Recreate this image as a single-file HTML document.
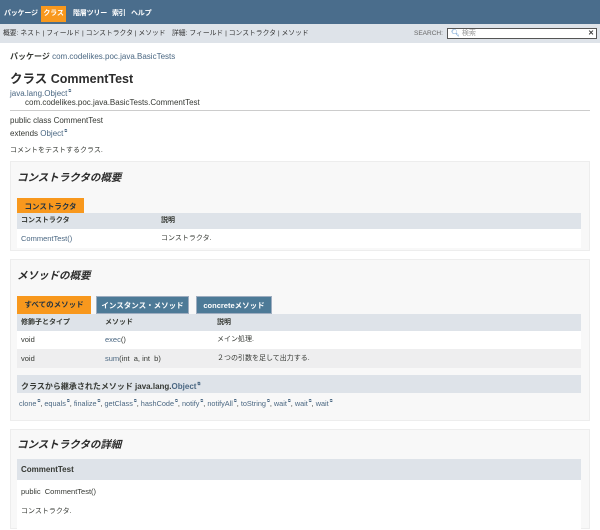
<!DOCTYPE html>
<html><head><meta charset="utf-8"><style>
*{margin:0;padding:0;box-sizing:border-box}
body{width:600px;height:524px;overflow:hidden;background:#fff;font-family:"Liberation Sans","Noto Sans CJK JP",sans-serif;font-size:8px;color:#353833;position:relative}
.a{position:absolute;white-space:nowrap}
.l{color:#4a6782;text-decoration:none}
.top{left:0;top:0;width:600px;height:24px;background:#4a6d8c}
.top span{position:absolute;top:6px;color:#fff;font-size:7px;line-height:16px;font-weight:bold;letter-spacing:-0.2px}
.sub{left:0;top:24px;width:600px;height:19px;background:#dee3e9;font-size:6.8px;line-height:19px;color:#333}
.box{position:absolute;left:10px;width:580px;background:#f8f8f8;border:1px solid #ededed}
.h3{position:absolute;left:6px;font-size:10.5px;font-weight:bold;font-style:italic;color:#2c2c2c}
.tab{position:absolute;height:18px;line-height:17px;font-weight:bold;font-size:7.5px;color:#fff;text-align:center}
.or{background:#f8981d;color:#253441}
.bl{background:#4d7a97;border:1px solid #9eadc0}
.hdr{position:absolute;left:6px;width:564px;background:#dee3e9;font-weight:bold;font-size:7px}
.row{position:absolute;left:6px;width:564px;font-size:7.5px}
.ext::after{content:"\29C9";font-size:4px;vertical-align:4px;margin-left:1px}
</style></head><body>
<div class="a top">
<span style="left:4px">パッケージ</span>
<span style="left:41px;width:25px;height:16px;background:#f8981d;text-align:center">クラス</span>
<span style="left:73px">階層ツリー</span>
<span style="left:112px">索引</span>
<span style="left:131px">ヘルプ</span>
</div>
<div class="a sub"><span style="position:absolute;left:3px">概要: ネスト | フィールド | コンストラクタ | メソッド</span><span style="position:absolute;left:172px">詳細: フィールド | コンストラクタ | メソッド</span>
<span style="position:absolute;left:414px;font-size:6.5px;color:#666">SEARCH:</span>
<div style="position:absolute;left:447px;top:4px;width:150px;height:11px;background:#fff;border:1px solid #555;line-height:9px;font-size:7px;color:#999;padding-left:3px"><span style="color:#4a86c5">&#x1F50D;&#xFE0E;</span> 検索<span style="position:absolute;right:2px;color:#333;font-weight:bold">✕</span></div></div>
<div class="a" style="left:10px;top:51px;font-size:8px"><b>パッケージ</b> <span class="l">com.codelikes.poc.java.BasicTests</span></div>
<div class="a" style="left:10px;top:68px;font-size:12.5px;font-weight:bold;color:#2c2c2c">クラス CommentTest</div>
<div class="a" style="left:10px;top:88px;font-size:8px"><span class="l ext">java.lang.Object</span></div>
<div class="a" style="left:25px;top:98px;font-size:8px">com.codelikes.poc.java.BasicTests.CommentTest</div>
<div class="a" style="left:10px;top:110px;width:580px;height:1px;background:#ccc"></div>
<div class="a" style="left:10px;top:116px;font-size:8px;line-height:10px">public class CommentTest<br>extends <span class="l ext">Object</span></div>
<div class="a" style="left:10px;top:145px;font-size:7px">コメントをテストするクラス.</div>

<div class="box" style="top:161px;height:90px">
<div class="h3" style="top:8px">コンストラクタの概要</div>
<div class="tab or" style="left:6px;top:36px;width:67px;height:16px">コンストラクタ</div>
<div class="hdr" style="top:51px;height:16px;line-height:16px"><span style="position:absolute;left:4px">コンストラクタ</span><span style="position:absolute;left:144px">説明</span></div>
<div class="row" style="top:67px;height:19px;line-height:19px;background:#fff"><span class="l" style="position:absolute;left:4px">CommentTest()</span><span style="position:absolute;left:144px;font-size:7px">コンストラクタ.</span></div>
</div>

<div class="box" style="top:259px;height:162px">
<div class="h3" style="top:8px">メソッドの概要</div>
<div class="tab or" style="left:6px;top:36px;width:74px">すべてのメソッド</div>
<div class="tab bl" style="left:85px;top:36px;width:93px">インスタンス・メソッド</div>
<div class="tab bl" style="left:185px;top:36px;width:76px">concreteメソッド</div>
<div class="hdr" style="top:54px;height:17px;line-height:17px"><span style="position:absolute;left:4px">修飾子とタイプ</span><span style="position:absolute;left:88px">メソッド</span><span style="position:absolute;left:200px">説明</span></div>
<div class="row" style="top:71px;height:18px;line-height:18px;background:#fff"><span style="position:absolute;left:4px">void</span><span style="position:absolute;left:88px"><span class="l">exec</span>()</span><span style="position:absolute;left:200px;font-size:7px">メイン処理.</span></div>
<div class="row" style="top:89px;height:19px;line-height:19px;background:#eeeeef"><span style="position:absolute;left:4px">void</span><span style="position:absolute;left:88px"><span class="l">sum</span>(int&nbsp; a, int&nbsp; b)</span><span style="position:absolute;left:200px;font-size:7px">２つの引数を足して出力する.</span></div>
<div class="hdr" style="top:115px;height:18px;line-height:18px;font-size:8px"><span style="position:absolute;left:4px">クラスから継承されたメソッド java.lang.<span class="l ext">Object</span></span></div>
<div class="row" style="top:138px;font-size:7.3px"><span style="position:absolute;left:2px"><span class="l ext">clone</span>, <span class="l ext">equals</span>, <span class="l ext">finalize</span>, <span class="l ext">getClass</span>, <span class="l ext">hashCode</span>, <span class="l ext">notify</span>, <span class="l ext">notifyAll</span>, <span class="l ext">toString</span>, <span class="l ext">wait</span>, <span class="l ext">wait</span>, <span class="l ext">wait</span></span></div>
</div>

<div class="box" style="top:429px;height:100px">
<div class="h3" style="top:7px">コンストラクタの詳細</div>
<div class="hdr" style="top:29px;height:21px;line-height:21px;font-size:8px"><span style="position:absolute;left:4px">CommentTest</span></div>
<div class="row" style="top:50px;height:50px;background:#fff"><span style="position:absolute;left:4px;top:7px">public&nbsp; CommentTest()</span><span style="position:absolute;left:4px;top:26px;font-size:7px">コンストラクタ.</span></div>
</div>
</body></html>
